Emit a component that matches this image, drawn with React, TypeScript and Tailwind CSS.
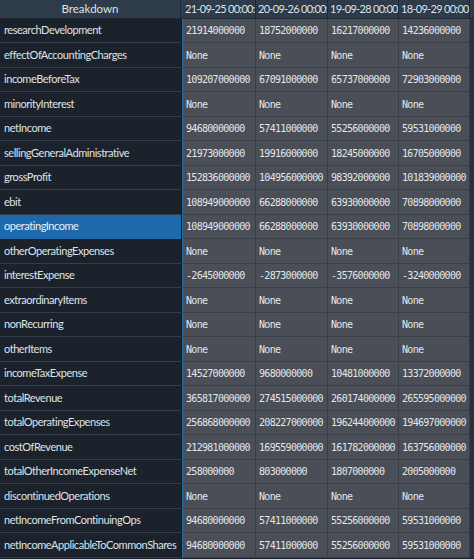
import React from "react";

const dates = ["21-09-25 00:00:", "20-09-26 00:00:", "19-09-28 00:00:", "18-09-29 00:00:"];

const rows: [string, string[]][] = [
  ["researchDevelopment", ["21914000000", "18752000000", "16217000000", "14236000000"]],
  ["effectOfAccountingCharges", ["None", "None", "None", "None"]],
  ["incomeBeforeTax", ["109207000000", "67091000000", "65737000000", "72903000000"]],
  ["minorityInterest", ["None", "None", "None", "None"]],
  ["netIncome", ["94680000000", "57411000000", "55256000000", "59531000000"]],
  ["sellingGeneralAdministrative", ["21973000000", "19916000000", "18245000000", "16705000000"]],
  ["grossProfit", ["152836000000", "104956000000", "98392000000", "101839000000"]],
  ["ebit", ["108949000000", "66288000000", "63930000000", "70898000000"]],
  ["operatingIncome", ["108949000000", "66288000000", "63930000000", "70898000000"]],
  ["otherOperatingExpenses", ["None", "None", "None", "None"]],
  ["interestExpense", ["-2645000000", "-2873000000", "-3576000000", "-3240000000"]],
  ["extraordinaryItems", ["None", "None", "None", "None"]],
  ["nonRecurring", ["None", "None", "None", "None"]],
  ["otherItems", ["None", "None", "None", "None"]],
  ["incomeTaxExpense", ["14527000000", "9680000000", "10481000000", "13372000000"]],
  ["totalRevenue", ["365817000000", "274515000000", "260174000000", "265595000000"]],
  ["totalOperatingExpenses", ["256868000000", "208227000000", "196244000000", "194697000000"]],
  ["costOfRevenue", ["212981000000", "169559000000", "161782000000", "163756000000"]],
  ["totalOtherIncomeExpenseNet", ["258000000", "803000000", "1807000000", "2005000000"]],
  ["discontinuedOperations", ["None", "None", "None", "None"]],
  ["netIncomeFromContinuingOps", ["94680000000", "57411000000", "55256000000", "59531000000"]],
  ["netIncomeApplicableToCommonShares", ["94680000000", "57411000000", "55256000000", "59531000000"]],
];

const colW = ["w-[73px]", "w-[72px]", "w-[71px]", "w-[71px]"];

export default function App() {
  return (
    <div className="w-[474px] h-[559px] overflow-hidden bg-[#1b222b] text-[#dfe3e8]">
      {/* header */}
      <div className="flex h-[19px] bg-[#2d3b4a] border-b border-[#1f2833] text-[11.5px] font-['Lato',sans-serif] leading-[18px]">
        <div className="w-[181px] text-center border-r border-[#1f2833]">Breakdown</div>
        <div className="w-[2px]" />
        {dates.map((d, i) => (
          <div key={d} className={`${colW[i]} shrink-0 overflow-hidden whitespace-nowrap pl-[2px] text-[11px] tracking-[-0.7px] border-r border-[#1f2833]`}>
            {d}
          </div>
        ))}
        <div className="flex-1" />
      </div>

      {rows.map(([name, vals], r) => {
        const sel = name === "operatingIncome";
        return (
          <div key={name} className={`flex ${r % 2 === 0 ? "h-[24px]" : "h-[25px]"}`}>
            <div
              className={`w-[181px] shrink-0 flex items-center pl-[4px] text-[11px] tracking-[-0.45px] font-['Lato',sans-serif] whitespace-nowrap border-b ${
                sel ? "bg-[#1d69ab] border-[#1d69ab] text-[#e8f0f8]" : "bg-[#1b222b] border-[#343e4a]"
              }`}
            >
              {name}
            </div>
            <div className="w-[1px] bg-[#141a21]" />
            <div className="w-[1px] bg-[#2d6e9c]" />
            {vals.map((v, i) => (
              <div
                key={i}
                className={`${colW[i]} shrink-0 flex items-center pl-[3px] bg-[#4a4f57] border-r border-b border-[#3a3e45] text-[10px] tracking-[-0.7px] font-['DejaVu_Sans_Mono',monospace] text-[#e4e6e9] whitespace-nowrap overflow-hidden`}
              >
                {v}
              </div>
            ))}
            <div className="flex-1 bg-[#28323d]" />
          </div>
        );
      })}
    </div>
  );
}
